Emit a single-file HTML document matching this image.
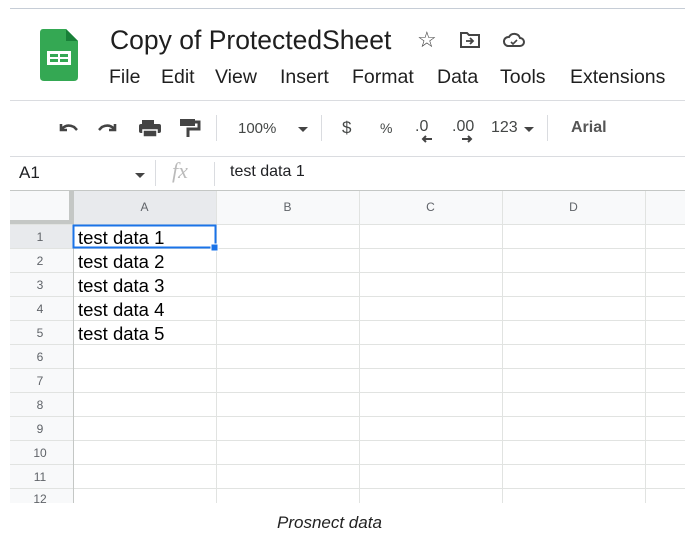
<!DOCTYPE html>
<html><head><style>
body{margin:0;width:695px;height:520px;background:#fff;position:relative;overflow:hidden;font-family:"Liberation Sans",Arial,sans-serif;color:#202124}
.a{position:absolute}
.m{position:absolute;top:66px;font-size:19.5px;color:#1f1f1f;white-space:nowrap}
.tb{color:#444746;font-size:16px}
.cell{position:absolute;font-size:18.5px;color:#000;left:78px}
.rn{position:absolute;left:10px;width:60px;text-align:center;font-size:12px;color:#5f6368}
.ch{position:absolute;top:190px;height:34px;line-height:34px;text-align:center;font-size:12px;color:#5f6368}
</style></head><body>
<div class="a" style="left:10px;top:8px;width:675px;height:1px;background:#c6cdd6"></div>
<svg class="a" style="left:40px;top:29px" width="38" height="52" viewBox="0 0 38 52">
<path d="M3 0H26L38 12V48Q38 52 34 52H4Q0 52 0 48V4Q0 0 3 0Z" fill="#34a853"/>
<path d="M26 0L38 12H26Z" fill="#188038"/>
<rect x="7" y="22" width="24" height="14" fill="#fff"/>
<rect x="10" y="25" width="8" height="3" fill="#34a853"/><rect x="20" y="25" width="8" height="3" fill="#34a853"/>
<rect x="10" y="30" width="8" height="3" fill="#34a853"/><rect x="20" y="30" width="8" height="3" fill="#34a853"/>
</svg>
<div class="a" style="left:110px;top:25px;font-size:26.5px;color:#1f1f1f">Copy of ProtectedSheet</div>
<div class="a" style="left:417px;top:27px;font-size:22px;color:#444">☆</div>
<svg class="a" style="left:459px;top:31px" width="22" height="18" viewBox="0 0 22 18"><path d="M2 2H8L10 4H20V16H2Z" fill="none" stroke="#444" stroke-width="2"/><path d="M7 10H14M11 7L14 10L11 13" fill="none" stroke="#444" stroke-width="1.8"/></svg>
<svg class="a" style="left:502px;top:31px" width="24" height="18" viewBox="0 0 24 18"><path d="M6 15H18A4 4 0 0 0 18 7A6 6 0 0 0 7 6A4.5 4.5 0 0 0 6 15Z" fill="none" stroke="#444" stroke-width="2"/><path d="M9 11L11 13L15 9" fill="none" stroke="#444" stroke-width="1.6"/></svg>
<div class="m" style="left:109px">File</div><div class="m" style="left:161px">Edit</div><div class="m" style="left:215px">View</div><div class="m" style="left:280px">Insert</div><div class="m" style="left:352px">Format</div><div class="m" style="left:437px">Data</div><div class="m" style="left:500px">Tools</div><div class="m" style="left:570px">Extensions</div>
<div class="a" style="left:10px;top:100px;width:675px;height:1px;background:#dadce0"></div>
<svg class="a" style="left:58px;top:118px" width="150" height="20" viewBox="0 0 150 20">
<path d="M3 6V12H9M3 12Q8 5 16 9L19 12" fill="none" stroke="#444" stroke-width="2.6"/>
<path d="M57 6V12H51M57 12Q52 5 44 9L41 12" fill="none" stroke="#444" stroke-width="2.6"/>
<rect x="84" y="2" width="12" height="4" fill="#444"/><rect x="81" y="6" width="22" height="9" rx="2" fill="#444"/><rect x="85" y="12" width="14" height="7" fill="#444" stroke="#fff" stroke-width="1.5"/>
<rect x="122" y="1" width="15" height="7" fill="#444"/><path d="M137 4H141V11H130V19" fill="none" stroke="#444" stroke-width="3"/>
</svg>
<div class="a" style="left:216px;top:115px;width:1px;height:26px;background:#dadce0"></div>
<div class="a tb" style="left:238px;top:120px;font-size:15px">100%</div>
<div class="a" style="left:298px;top:127px;border:5px solid transparent;border-top-color:#444;border-bottom:0"></div>
<div class="a" style="left:321px;top:115px;width:1px;height:26px;background:#dadce0"></div>
<div class="a tb" style="left:342px;top:118px;font-size:17px">$</div>
<div class="a tb" style="left:380px;top:120px;font-size:14px">%</div>
<div class="a tb" style="left:415px;top:118px;font-size:16px">.0</div>
<div class="a tb" style="left:452px;top:118px;font-size:16px">.00</div>
<svg class="a" style="left:420px;top:135px" width="60" height="8" viewBox="0 0 60 8"><path d="M12 4H3M6 1L3 4L6 7" fill="none" stroke="#444" stroke-width="2"/><path d="M42 4H51M48 1L51 4L48 7" fill="none" stroke="#444" stroke-width="2"/></svg>
<div class="a tb" style="left:491px;top:119px;font-size:16px">123</div>
<div class="a" style="left:524px;top:127px;border:5px solid transparent;border-top-color:#444;border-bottom:0"></div>
<div class="a" style="left:547px;top:115px;width:1px;height:26px;background:#dadce0"></div>
<div class="a tb" style="left:571px;top:119px;font-size:16px;font-weight:bold;color:#555">Arial</div>
<div class="a" style="left:10px;top:156px;width:675px;height:1px;background:#dadce0"></div>
<div class="a" style="left:19px;top:163px;font-size:17px;color:#202124">A1</div>
<div class="a" style="left:135px;top:173px;border:5px solid transparent;border-top-color:#444;border-bottom:0"></div>
<div class="a" style="left:155px;top:160px;width:1px;height:26px;background:#dadce0"></div>
<div class="a" style="left:172px;top:158px;font-size:22px;font-style:italic;font-family:'Liberation Serif',serif;color:#bbb">fx</div>
<div class="a" style="left:214px;top:162px;width:1px;height:24px;background:#dadce0"></div>
<div class="a" style="left:230px;top:163px;font-size:16px">test data 1</div>
<div class="a" style="left:10px;top:190px;width:675px;height:1px;background:#c4c7c5"></div>
<div class="a" style="left:10px;top:191px;width:675px;height:33px;background:#f8f9fa"></div>
<div class="a" style="left:10px;top:224px;width:63px;height:279px;background:#f8f9fa"></div>
<div class="a" style="left:73px;top:191px;width:143px;height:33px;background:#e8eaed"></div>
<div class="a" style="left:10px;top:225px;width:63px;height:23px;background:#e8eaed"></div>
<div class="a" style="left:10px;top:220px;width:63px;height:4px;background:#c4c7c5"></div>
<div class="a" style="left:69px;top:191px;width:4px;height:33px;background:#c4c7c5"></div>
<div class="ch" style="left:73px;width:143px">A</div>
<div class="ch" style="left:216px;width:143px">B</div>
<div class="ch" style="left:359px;width:143px">C</div>
<div class="ch" style="left:502px;width:143px">D</div>
<svg class="a" style="left:0;top:0" width="695" height="520">
<g stroke="#e1e3e1" stroke-width="1">
<line x1="10" y1="224.5" x2="685" y2="224.5"/>
<line x1="10" y1="248.5" x2="685" y2="248.5"/><line x1="10" y1="272.5" x2="685" y2="272.5"/><line x1="10" y1="296.5" x2="685" y2="296.5"/><line x1="10" y1="320.5" x2="685" y2="320.5"/><line x1="10" y1="344.5" x2="685" y2="344.5"/><line x1="10" y1="368.5" x2="685" y2="368.5"/><line x1="10" y1="392.5" x2="685" y2="392.5"/><line x1="10" y1="416.5" x2="685" y2="416.5"/><line x1="10" y1="440.5" x2="685" y2="440.5"/><line x1="10" y1="464.5" x2="685" y2="464.5"/><line x1="10" y1="488.5" x2="685" y2="488.5"/>
<line x1="73.5" y1="191" x2="73.5" y2="503" stroke="#c4c7c5"/><line x1="216.5" y1="191" x2="216.5" y2="503"/><line x1="359.5" y1="191" x2="359.5" y2="503"/><line x1="502.5" y1="191" x2="502.5" y2="503"/><line x1="645.5" y1="191" x2="645.5" y2="503"/>
</g>
<rect x="73.5" y="225.5" width="142" height="22" fill="none" stroke="#1a73e8" stroke-width="2"/>
<rect x="211" y="244" width="7" height="7" fill="#1a73e8" stroke="#fff" stroke-width="1"/>
</svg>
<div class="rn" style="top:230px">1</div><div class="rn" style="top:254px">2</div><div class="rn" style="top:278px">3</div><div class="rn" style="top:302px">4</div><div class="rn" style="top:326px">5</div><div class="rn" style="top:350px">6</div><div class="rn" style="top:374px">7</div><div class="rn" style="top:398px">8</div><div class="rn" style="top:422px">9</div><div class="rn" style="top:446px">10</div><div class="rn" style="top:470px">11</div><div class="rn" style="top:492px;height:11px;overflow:hidden">12</div>
<div class="cell" style="top:227px">test data 1</div>
<div class="cell" style="top:251px">test data 2</div>
<div class="cell" style="top:275px">test data 3</div>
<div class="cell" style="top:299px">test data 4</div>
<div class="cell" style="top:323px">test data 5</div>
<div class="a" style="left:277px;top:513px;font-size:17px;font-style:italic;color:#222">Prosnect data</div>
</body></html>
